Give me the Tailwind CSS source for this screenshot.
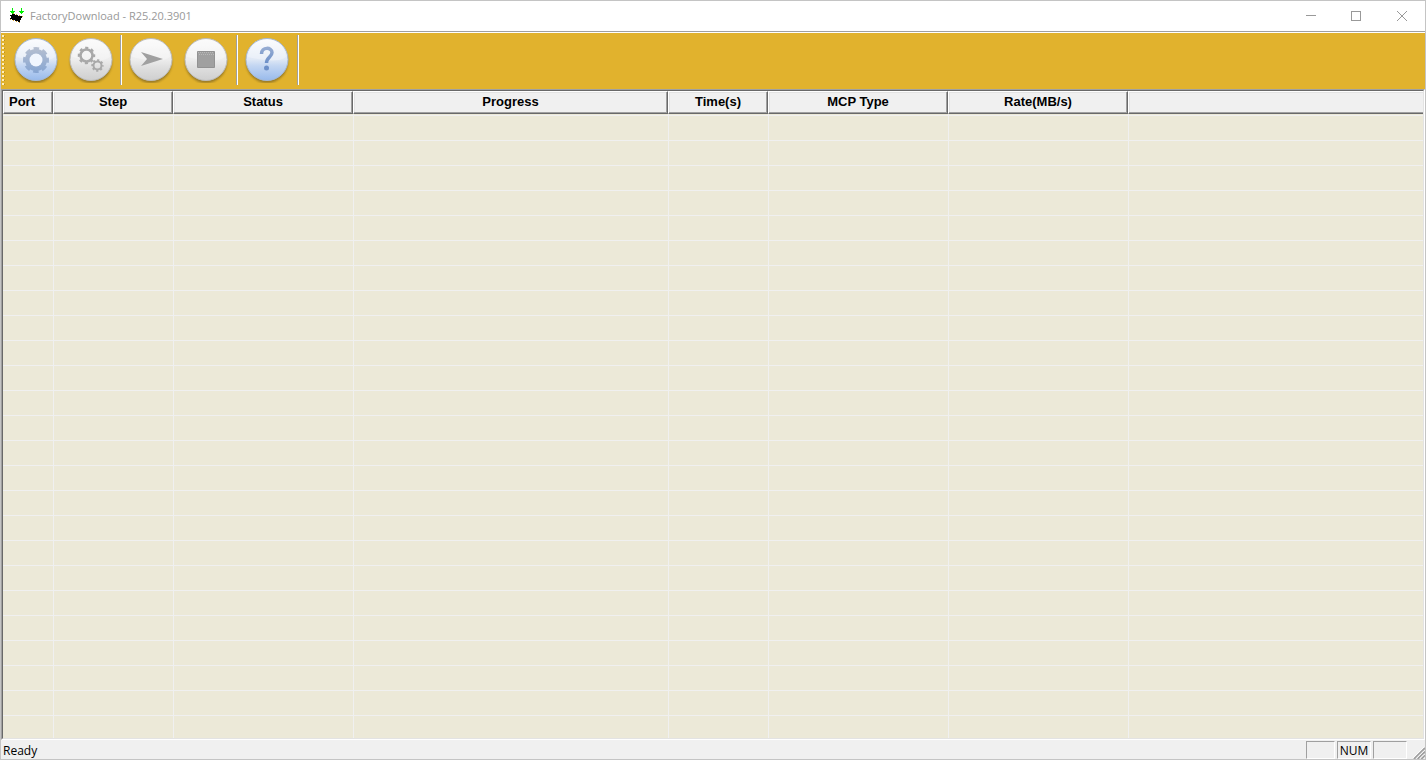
<!DOCTYPE html>
<html lang="en">
<head>
<meta charset="utf-8">
<meta name="viewport" content="width=device-width, initial-scale=1">
<title>FactoryDownload - R25.20.3901</title>
<script src="https://cdn.jsdelivr.net/npm/@tailwindcss/browser@4"></script>
</head>
<body class="h-screen overflow-hidden bg-white font-['Open_Sans','Noto_Sans',sans-serif] text-xs text-black">
<svg class="absolute size-0" aria-hidden="true">
  <defs>
    <linearGradient id="blue" x1="0" y1="0" x2="0" y2="1"><stop offset="0" stop-color="#fafbfd"/><stop offset=".5" stop-color="#dfe8f5"/><stop offset=".65" stop-color="#c3d6f2"/><stop offset="1" stop-color="#98baec"/></linearGradient>
    <linearGradient id="gray" x1="0" y1="0" x2="0" y2="1"><stop offset="0" stop-color="#fafafa"/><stop offset=".5" stop-color="#ededed"/><stop offset=".7" stop-color="#dedede"/><stop offset="1" stop-color="#cfcfcf"/></linearGradient>
    <linearGradient id="gearBlue" gradientUnits="userSpaceOnUse" x1="0" y1="10" x2="0" y2="36"><stop offset="0" stop-color="#b7c0d0"/><stop offset="1" stop-color="#86a5d2"/></linearGradient>
    <linearGradient id="mark" x1="0" y1="0" x2="0" y2="1"><stop offset="0" stop-color="#94abd2"/><stop offset="1" stop-color="#6c8fc8"/></linearGradient>
    <filter id="soft" x="-20%" y="-20%" width="140%" height="140%"><feGaussianBlur stdDeviation="1"/></filter>
  </defs>
</svg>
<div class="flex h-full flex-col border border-[#c4c4c4]">
  <header class="flex h-[30px] shrink-0 items-center bg-white text-[#999999]">
    <svg class="ml-2 size-4" viewBox="0 0 16 16" shape-rendering="crispEdges" aria-hidden="true">
      <path fill="#00f000" d="M3 0h1v3h2v1h-1v1h-1v1h-1v-1h-1v-1h-1v-1h2zM12 0h1v3h2v1h-1v1h-1v1h-1v-1h-1v-1h-1v-1h2z"/>
      <path fill="#000" d="M3 6h3v1h3v1h4v2h-1v2h-1v2h-2v-1h-3v-1h-3v-1h-2v-1h1v-2h-1v-1h1z"/>
      <path fill="#d6a02c" d="M4 5h1v1h-1zM7 6h1v1h-1zM10 7h1v1h-1zM13 8h1v1h-1zM1 11h1v1h-1zM4 12h1v1h-1zM7 13h1v1h-1zM10 14h1v1h-1z"/>
    </svg>
    <h1 class="ml-[5px] flex-1 text-[11px]">FactoryDownload - R25.20.3901</h1>
    <button class="flex h-full w-[45px] items-center justify-center" aria-label="Minimize"><svg class="size-[10px]" viewBox="0 0 10 10" stroke="#999" shape-rendering="crispEdges"><path d="M0 4.500h10"/></svg></button>
    <button class="flex h-full w-[46px] items-center justify-center" aria-label="Maximize"><svg class="size-[10px]" viewBox="0 0 10 10" fill="none" stroke="#999" shape-rendering="crispEdges"><path d="M.5.5h9v9h-9z"/></svg></button>
    <button class="flex h-full w-[46px] items-center justify-center" aria-label="Close"><svg class="size-[10px]" viewBox="0 0 10 10" stroke="#999"><path d="M0 0l10 10M10 0L0 10"/></svg></button>
  </header>
  <div role="toolbar" aria-label="Main" class="flex h-[58px] shrink-0 items-center border-t border-[#a0a0a0] bg-[#e1b22d] pb-[2px] shadow-[inset_0_1px_0_#fff]">
    <svg class="mt-px h-[54px] w-1 shrink-0" viewBox="0 0 4 54" aria-hidden="true"><path d="M2 2v52" stroke="#fff0c0" stroke-width="2" stroke-dasharray="2 2"/><path d="M3.500 3v51" stroke="#b98f20" stroke-dasharray="1 3"/></svg>
    <button class="ml-2 size-[46px]" aria-label="Settings">
      <svg viewBox="0 0 46 46"><circle cx="23" cy="25" r="21" fill="#7b6422" opacity=".7" filter="url(#soft)"/><circle cx="23" cy="22.500" r="21" fill="url(#blue)" stroke="#a5b9d6"/><path d="M4 20C6-3 40-3 42 20Q33 27 4 20" fill="#fff" opacity=".3"/><circle cx="23" cy="23" r="8.500" fill="none" stroke="url(#gearBlue)" stroke-width="5"/><circle cx="23" cy="23" r="11.500" fill="none" stroke="url(#gearBlue)" stroke-width="3" stroke-dasharray="5.500 3.532" stroke-dashoffset="2.750"/><circle cx="23" cy="23" r="6.500" fill="#f1f6fe"/></svg>
    </button>
    <button class="ml-[9px] size-[46px]" aria-label="Advanced settings">
      <svg viewBox="0 0 46 46"><circle cx="23" cy="25" r="21" fill="#7b6422" opacity=".7" filter="url(#soft)"/><circle cx="23" cy="22.500" r="21" fill="url(#gray)" stroke="#bcbcbc"/><path d="M4 20C6-3 40-3 42 20Q33 27 4 20" fill="#fff" opacity=".3"/><g fill="none" stroke="#a9a9a9"><circle cx="18.500" cy="18.500" r="6" stroke-width="2.500"/><circle cx="18.500" cy="18.500" r="7.500" stroke-width="2.500" stroke-dasharray="3 2.890" stroke-dashoffset="1.500"/><circle cx="29.500" cy="28.500" r="4" stroke-width="2"/><circle cx="29.500" cy="28.500" r="5.200" stroke-width="2" stroke-dasharray="2.100 1.984" stroke-dashoffset="1"/></g></svg>
    </button>
    <div class="ml-[6px] h-[50px] w-[2px] border-l border-[#a0a0a0] bg-white"></div>
    <button class="ml-[6px] size-[46px]" aria-label="Start">
      <svg viewBox="0 0 46 46"><circle cx="23" cy="25" r="21" fill="#7b6422" opacity=".7" filter="url(#soft)"/><circle cx="23" cy="22.500" r="21" fill="url(#gray)" stroke="#bcbcbc"/><path d="M4 20C6-3 40-3 42 20Q33 27 4 20" fill="#fff" opacity=".3"/><path d="M13 15L35 22L13 29L19 22Z" fill="#a0a0a0"/></svg>
    </button>
    <button class="ml-[9px] size-[46px]" aria-label="Stop">
      <svg viewBox="0 0 46 46"><circle cx="23" cy="25" r="21" fill="#7b6422" opacity=".7" filter="url(#soft)"/><circle cx="23" cy="22.500" r="21" fill="url(#gray)" stroke="#bcbcbc"/><path d="M4 20C6-3 40-3 42 20Q33 27 4 20" fill="#fff" opacity=".3"/><path d="M14.500 14.500h17v16h-17z" fill="#a0a0a0" stroke="#929292"/><path d="M15 15.500h16M16 17.500h15" stroke="#b8b8b8" stroke-dasharray="1 1"/></svg>
    </button>
    <div class="ml-[7px] h-[50px] w-[2px] border-l border-[#a0a0a0] bg-white"></div>
    <button class="ml-[6px] size-[46px]" aria-label="Help">
      <svg viewBox="0 0 46 46"><circle cx="23" cy="25" r="21" fill="#7b6422" opacity=".7" filter="url(#soft)"/><circle cx="23" cy="22.500" r="21" fill="url(#blue)" stroke="#a5b9d6"/><path d="M4 20C6-3 40-3 42 20Q33 27 4 20" fill="#fff" opacity=".3"/><path d="M17.500 17C17.500 9.500 28 10 28 15.500C28 20 22.500 20 22.500 26" fill="none" stroke="url(#mark)" stroke-width="3.500"/><circle cx="22.500" cy="31" r="2.500" fill="#6c8fc8"/></svg>
    </button>
    <div class="ml-[7px] h-[50px] w-[2px] border-l border-[#a0a0a0] bg-white"></div>
  </div>
  <main class="min-h-0 flex-1 overflow-hidden border border-r-[#ffffff] border-b-[#ffffff] border-l-[#a0a0a0] border-t-[#a0a0a0]">
    <div class="h-full overflow-hidden border border-t-[#696969] border-r-[#e3e3e3] border-b-[#e3e3e3] border-l-[#696969] bg-[#ece9d8]">
      <table class="w-full table-fixed border-separate border-spacing-0">
        <colgroup><col class="w-[50px]"><col class="w-[120px]"><col class="w-[180px]"><col class="w-[315px]"><col class="w-[100px]"><col class="w-[180px]"><col class="w-[180px]"><col></colgroup>
        <thead class="font-['Liberation_Sans',Arial,sans-serif] text-[13px] leading-[18px] [&_th]:h-[23px] [&_th]:border [&_th]:border-t-white [&_th]:border-r-[#696969] [&_th]:border-b-[#696969] [&_th]:border-l-white [&_th]:bg-[#f0f0f0] [&_th]:p-0 [&_th]:pb-[2px] [&_th]:font-bold [&_th]:shadow-[inset_-1px_-1px_0_#a0a0a0,inset_1px_1px_0_#e3e3e3]">
          <tr><th scope="col"><span class="block pl-[5px] text-left">Port</span></th><th scope="col">Step</th><th scope="col">Status</th><th scope="col">Progress</th><th scope="col">Time(s)</th><th scope="col">MCP Type</th><th scope="col">Rate(MB/s)</th><td class="border-y border-l border-t-white border-b-[#696969] border-l-white bg-[#f0f0f0] shadow-[inset_0_-1px_0_#a0a0a0,inset_1px_1px_0_#e3e3e3]"></td></tr>
        </thead>
        <tbody id="ports" class="[&_td]:h-[25px] [&_td]:border-b [&_td]:border-[#f0f0f0] [&_td]:p-0 [&_td+td]:border-l"></tbody>
      </table>
    </div>
  </main>
  <footer class="flex h-[19px] shrink-0 items-center bg-[#f0f0f0] pl-[2px]">
    <span class="flex-1 pt-[2px]">Ready</span>
    <span class="mt-px h-[18px] w-[29px] border border-t-[#a0a0a0] border-r-white border-b-white border-l-[#a0a0a0]"></span>
    <span class="mt-px ml-[2px] h-[18px] w-[34px] border border-t-[#a0a0a0] border-r-white border-b-white border-l-[#a0a0a0] text-center leading-[18px]">NUM</span>
    <span class="mt-px ml-[2px] h-[18px] w-[34px] border border-t-[#a0a0a0] border-r-white border-b-white border-l-[#a0a0a0]"></span>
    <svg class="ml-[6px] size-3 self-end" viewBox="0 0 13 13" fill="none" aria-hidden="true"><path d="M1 13L13 1M5 13L13 5M9 13L13 9" stroke="#a0a0a0" stroke-width="2"/><path d="M0 12L12 0M4 12L12 4M8 12L12 8" stroke="#fff"/></svg>
  </footer>
</div>
<script>
  // Gap under the header, followed by empty port rows
  const cells = '<td></td>'.repeat(8);
  document.getElementById('ports').innerHTML =
    '<tr class="[&>td]:h-[2px]!" aria-hidden="true">' + cells + '</tr>' + ('<tr>' + cells + '</tr>').repeat(60);
</script>
</body>
</html>
